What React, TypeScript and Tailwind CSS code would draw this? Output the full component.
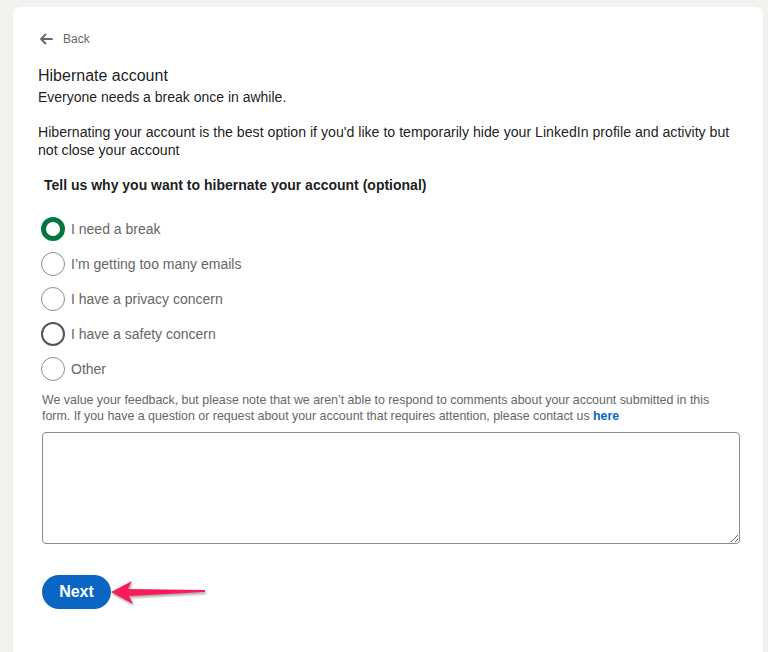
import { useState } from "react";

const reasons = [
  "I need a break",
  "I’m getting too many emails",
  "I have a privacy concern",
  "I have a safety concern",
  "Other",
];

function BackArrow() {
  return (
    <svg width="16" height="16" viewBox="0 0 16 16" fill="none">
      <path
        d="M14 8H3M7.5 3.5L3 8l4.5 4.5"
        stroke="#666666"
        strokeWidth="1.8"
        strokeLinecap="round"
        strokeLinejoin="round"
      />
    </svg>
  );
}

function PinkArrow() {
  return (
    <svg width="100" height="26" viewBox="0 0 100 26" className="drop-shadow-[1px_2px_1px_rgba(0,0,0,0.35)]">
      <path d="M2 13 L23 2 L19 10 L96 11 L96 13 L20 17 L24 25 Z" fill="#fa1a5a" />
    </svg>
  );
}

export default function App() {
  const [selected, setSelected] = useState(0);
  const [comment, setComment] = useState("");

  return (
    <div
      className="min-h-[652px] bg-[#f3f2ef] pl-[13px] pr-[5px] pt-[7px]"
      style={{ fontFamily: '"Liberation Sans", Arial, sans-serif' }}
    >
      <div className="min-h-[645px] rounded-t-lg bg-white pl-[25px] pr-6 pt-[24px]">
        <button type="button" className="flex items-center gap-[9px] text-xs text-[#666666]">
          <BackArrow />
          <span>Back</span>
        </button>

        <h1 className="mt-[19px] text-base leading-5 text-black/90">Hibernate account</h1>
        <p className="mt-[1px] text-sm leading-5 text-black/90">Everyone needs a break once in awhile.</p>

        <p className="mt-[16px] text-[14.15px] leading-[18px] text-black/90">
          Hibernating your account is the best option if you'd like to temporarily hide your LinkedIn
          profile and activity but not close your account
        </p>

        <h2 className="ml-[6px] mt-[16px] text-sm font-bold leading-5 text-black/90">
          Tell us why you want to hibernate your account (optional)
        </h2>

        <div className="mt-[22px] flex flex-col gap-[11px]">
          {reasons.map((r, i) => (
            <label key={r} className="flex cursor-pointer items-center gap-[6px]">
              <input
                type="radio"
                name="reason"
                className="sr-only"
                checked={selected === i}
                onChange={() => setSelected(i)}
              />
              <span
                className={
                  selected === i
                    ? "ml-[3px] h-6 w-6 rounded-full border-[5px] border-[#057642] bg-white"
                    : i === 3
                      ? "ml-[3px] h-6 w-6 rounded-full border-2 border-[#555555] bg-white"
                      : "ml-[3px] h-6 w-6 rounded-full border-[1.5px] border-[#8c8c8c] bg-white"
                }
              />
              <span className="text-sm text-[#666666]">{r}</span>
            </label>
          ))}
        </div>

        <p className="ml-1 mt-[11px] pr-4 text-[12.4px] leading-4 text-[#666666]">
          We value your feedback, but please note that we aren’t able to respond to comments about your
          account submitted in this form. If you have a question or request about your account that
          requires attention, please contact us{" "}
          <a href="#" className="font-bold text-[#0a66c2]">
            here
          </a>
        </p>

        <textarea
          value={comment}
          onChange={(e) => setComment(e.target.value)}
          className="ml-1 mt-[8px] block h-[112px] w-[698px] rounded-sm border border-[#8c8c8c] p-2 text-sm outline-none"
        />

        <div className="ml-1 mt-[31px] flex items-center">
          <button
            type="button"
            className="h-[34px] w-[69px] rounded-full bg-[#0a66c2] text-base font-bold text-white"
          >
            Next
          </button>
          <div className="-ml-[2px]">
            <PinkArrow />
          </div>
        </div>
      </div>
    </div>
  );
}
